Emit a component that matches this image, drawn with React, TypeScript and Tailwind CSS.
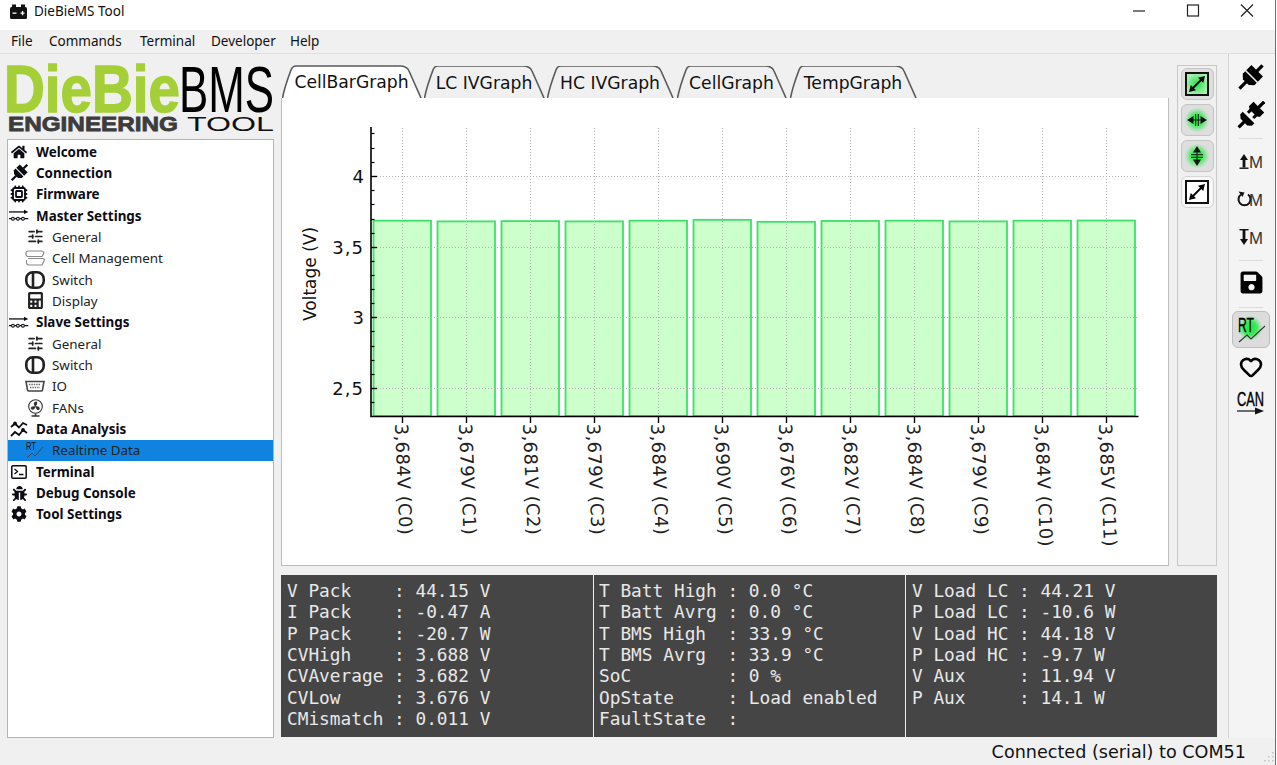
import React from 'react';
import { Cpu, Heart, SlidersHorizontal } from 'lucide-react';
import { FaBug, FaCalculator, FaCog, FaHome, FaSave } from 'react-icons/fa';

const PlugOn = ({ size = 24 }: { size?: number }) => (
  <svg width={size} height={size} viewBox="0 0 24 24">
    <g transform="rotate(45 12 12)" fill="currentColor">
      <rect x="10.600" y="-2" width="2.800" height="7" />
      <path d="M5 4.500h14v6.200H5z" />
      <path d="M5 12h14v3l-3.500 3.300h-7L5 15z" />
      <rect x="10.600" y="17" width="2.800" height="9" />
    </g>
  </svg>
);

const PlugOff = ({ size = 24 }: { size?: number }) => (
  <svg width={size} height={size} viewBox="0 0 24 24">
    <g transform="rotate(45 12 12)" fill="currentColor">
      <rect x="10.600" y="-4" width="2.800" height="8" />
      <path d="M5.500 2.500h13V8l-2.500 1.500H8L5.500 8z" />
      <rect x="7.500" y="9" width="2.600" height="3.500" />
      <rect x="13.900" y="9" width="2.600" height="3.500" />
      <path d="M5 15h14v3l-3 2.600H8L5 18z" />
      <rect x="10.600" y="20" width="2.800" height="7" />
    </g>
  </svg>
);

const Bus = () => (
  <svg width="28" height="17" viewBox="0 0 28 17" fill="none" stroke="currentColor">
    <path d="M0 3.500h23" strokeWidth="1.800" />
    <path d="M21 0.500l6 3-6 3z" fill="currentColor" stroke="none" />
    <path d="M0 13h3M8 13h2M15 13h2M22 13h5" strokeWidth="1.800" />
    <circle cx="5.500" cy="13" r="2" strokeWidth="1.600" />
    <circle cx="12.500" cy="13" r="2" strokeWidth="1.600" />
    <circle cx="19.500" cy="13" r="2" strokeWidth="1.600" />
  </svg>
);

const SwitchIcon = () => (
  <svg width="20" height="18" viewBox="0 0 20 18" fill="none" stroke="currentColor">
    <rect x="1.300" y="1.300" width="17.400" height="15.400" rx="6.500" strokeWidth="2.600" />
    <path d="M8 2v14" strokeWidth="2.600" />
  </svg>
);

const CellIcon = () => (
  <svg width="20" height="17" viewBox="0 0 20 17" fill="none" stroke="#8a8a8a" strokeWidth="1.200">
    <path d="M3 1h14a2 2 0 0 1 1.500 3L17 6.500H3A2 2 0 0 1 1 4.500V3a2 2 0 0 1 2-2z" />
    <path d="M3 8.500h15a1.500 1.500 0 0 1 1 2.500l-2 4H4a2.500 2.500 0 0 1-2.500-2.500V10" />
  </svg>
);

const IoIcon = () => (
  <svg width="20" height="12" viewBox="0 0 20 12" fill="none">
    <path d="M1 1.500h18l-1.500 8.500a1.500 1.500 0 0 1-1.500 1H4a1.500 1.500 0 0 1-1.500-1z" stroke="#444" strokeWidth="1.600" />
    <path d="M4 4.500h12M5 7.500h10" stroke="#666" strokeWidth="1.600" strokeDasharray="1.400 1" />
  </svg>
);

const FanIcon = () => (
  <svg width="17" height="18" viewBox="0 0 17 18" fill="none">
    <circle cx="8.500" cy="7.500" r="6.800" stroke="#333" strokeWidth="1.100" />
    <path d="M8.500 7.500C6 6 6.500 2.800 9 2.500c2 .2 1.600 3-.5 5zM8.500 7.500c2.700-1 5 1 4 3-1.200 1.500-3.400.2-4-3zM8.500 7.500c-.2 3-3 4-4.500 2.500-1-1.800 1.500-3.400 4.500-2.500z" fill="#333" />
    <path d="M8.500 14.500V16.500M4.500 17h8" stroke="#333" strokeWidth="1.500" />
  </svg>
);

const AnalysisIcon = () => (
  <svg width="18" height="17" viewBox="0 0 18 17" fill="none" stroke="currentColor" strokeWidth="1.800">
    <path d="M1 6l4-3.500 4 4 4-4.500 4 2" />
    <path d="M1 15l4-4 4 3 4-5 4 3" />
    <circle cx="5" cy="2.500" r="1" fill="currentColor" />
    <circle cx="13" cy="9" r="1" fill="currentColor" />
  </svg>
);

const RtSmall = () => (
  <svg width="18" height="18" viewBox="0 0 18 18" fill="none">
    <text x="0" y="9" fontFamily="'Liberation Sans', sans-serif" fontSize="11" textLength="10" lengthAdjust="spacingAndGlyphs" fill="#111">RT</text>
    <path d="M1 17l5-5 3 3 8-9" stroke="#444" strokeWidth="1" />
  </svg>
);

const TerminalIcon = () => (
  <svg width="16" height="14" viewBox="0 0 16 14" fill="none" stroke="currentColor">
    <rect x="0.800" y="0.800" width="14.400" height="12.400" rx="1" strokeWidth="1.500" />
    <path d="M3.500 4l3 2.500-3 2.500M8 9.500h4.500" strokeWidth="1.300" />
  </svg>
);

const DoubleArrow = () => (
  <g>
    <path d="M6 18L18 6" stroke="#000" strokeWidth="1.800" />
    <path d="M20 4l-7 1.800 5.200 5.200zM4 20l7-1.800L5.800 13z" fill="#000" />
  </g>
);

const FrameBtn = ({ green }: { green?: boolean }) => (
  <svg width="24" height="24" viewBox="0 0 24 24">
    <defs>
      <radialGradient id="frameGlow">
        <stop offset="0%" stopColor="#1fe04a" />
        <stop offset="100%" stopColor="#a8f0b0" />
      </radialGradient>
    </defs>
    <rect x="1" y="1" width="22" height="22" fill={green ? 'url(#frameGlow)' : '#fff'} stroke="#111" strokeWidth="2" />
    <DoubleArrow />
  </svg>
);

const AxisBtn = ({ vertical }: { vertical?: boolean }) => (
  <svg width="30" height="30" viewBox="0 0 30 30">
    <defs>
      <radialGradient id="axisGlow">
        <stop offset="0%" stopColor="#12f03c" />
        <stop offset="45%" stopColor="#40ea5c" />
        <stop offset="100%" stopColor="#60e878" stopOpacity="0" />
      </radialGradient>
    </defs>
    <circle cx="15" cy="15" r="12.500" fill="url(#axisGlow)" />
    <g transform={vertical ? 'rotate(90 15 15)' : undefined} fill="#111">
      <path d="M5 15l6.500-4v8zM25 15l-6.500-4v8z" />
      <rect x="13.200" y="9" width="1" height="12" />
      <rect x="15.800" y="9" width="1" height="12" />
      <rect x="10" y="14.500" width="10" height="1" />
    </g>
  </svg>
);

const MemIcon = ({ kind }: { kind: 'up' | 'cycle' | 'down' }) => (
  <svg width="28" height="22" viewBox="0 0 28 22" fill="none">
    {kind === 'up' && (
      <g fill="#111">
        <path d="M7 4l4 6h-2.600v7.500h-2.800V10H3z" />
        <rect x="2.500" y="17.500" width="9" height="1.400" />
      </g>
    )}
    {kind === 'down' && (
      <g fill="#111">
        <rect x="2.500" y="3" width="9" height="1.400" />
        <path d="M7 19l4-6H8.400V4H5.600v9H3z" />
      </g>
    )}
    {kind === 'cycle' && (
      <g>
        <path d="M4 6.500a6 6 0 1 0 7 0" stroke="#111" strokeWidth="2" />
        <path d="M1.500 3.500l6 1-2 4.500z" fill="#111" />
      </g>
    )}
    <text x="12" y="18" fontFamily="'Liberation Sans', sans-serif" fontSize="17" fill="#333" textLength="14" lengthAdjust="spacingAndGlyphs">M</text>
  </svg>
);

const RtBig = () => (
  <svg width="36" height="35" viewBox="0 0 36 35" fill="none">
    <defs>
      <radialGradient id="rtGlow">
        <stop offset="0%" stopColor="#14f03c" />
        <stop offset="55%" stopColor="#3fe85c" />
        <stop offset="100%" stopColor="#5fe878" stopOpacity="0" />
      </radialGradient>
    </defs>
    <circle cx="17" cy="16" r="12.500" fill="url(#rtGlow)" />
    <text x="5" y="20" fontFamily="'Liberation Sans', sans-serif" fontSize="21" textLength="16" lengthAdjust="spacingAndGlyphs" fill="#000" stroke="#000" strokeWidth="0.300">RT</text>
    <path d="M6 30l8-7 4 4 14-13" stroke="#333" strokeWidth="1.100" />
  </svg>
);

const CanIcon = () => (
  <svg width="30" height="28" viewBox="0 0 30 28" fill="none">
    <text x="1" y="18" fontFamily="'Liberation Sans', sans-serif" fontSize="20" textLength="27" lengthAdjust="spacingAndGlyphs" fill="#000" stroke="#000" strokeWidth="0.400">CAN</text>
    <path d="M1 23h22" stroke="#111" strokeWidth="1.200" />
    <path d="M19 19.500l9 3.500-9 3.500z" fill="#111" />
  </svg>
);

const Separator = () => <div className="h-px w-[24px] bg-[#dcdcdc]" />;

const tree = [
  { label: 'Welcome', icon: <FaHome size={16} /> },
  { label: 'Connection', icon: <PlugOn size={19} /> },
  { label: 'Firmware', icon: <Cpu size={18} strokeWidth={2.400} /> },
  { label: 'Master Settings', icon: <Bus /> },
  { label: 'General', child: true, icon: <SlidersHorizontal size={17} strokeWidth={2.400} /> },
  { label: 'Cell Management', child: true, icon: <CellIcon /> },
  { label: 'Switch', child: true, icon: <SwitchIcon /> },
  { label: 'Display', child: true, icon: <FaCalculator size={17} /> },
  { label: 'Slave Settings', icon: <Bus /> },
  { label: 'General', child: true, icon: <SlidersHorizontal size={17} strokeWidth={2.400} /> },
  { label: 'Switch', child: true, icon: <SwitchIcon /> },
  { label: 'IO', child: true, icon: <IoIcon /> },
  { label: 'FANs', child: true, icon: <FanIcon /> },
  { label: 'Data Analysis', icon: <AnalysisIcon /> },
  { label: 'Realtime Data', child: true, selected: true, icon: <RtSmall /> },
  { label: 'Terminal', icon: <TerminalIcon /> },
  { label: 'Debug Console', icon: <FaBug size={15} /> },
  { label: 'Tool Settings', icon: <FaCog size={16} /> },
];

const menus = [
  { label: 'File', cls: 'w-[38px]' },
  { label: 'Commands', cls: 'w-[91px]' },
  { label: 'Terminal', cls: 'w-[71px]' },
  { label: 'Developer', cls: 'w-[79px]' },
  { label: 'Help', cls: 'w-[40px]' },
];

const tabs = [
  { label: 'CellBarGraph', width: 140, active: true, gap: 'mr-[2px]' },
  { label: 'LC IVGraph', width: 121, gap: 'mr-[2px]' },
  { label: 'HC IVGraph', width: 127, gap: 'mr-[3px]' },
  { label: 'CellGraph', width: 110, gap: 'mr-[3px]' },
  { label: 'TempGraph', width: 127, gap: '' },
];

const Tab = ({ label, width, active, gap }: { label: string; width: number; active?: boolean; gap: string }) => {
  const h = active ? 33 : 32;
  const path = `M0.500 ${h}C2 ${h - 8} 6 ${h - 20} 9 ${h - 28}Q10.500 ${h - 32} 14 ${h - 32}L${width - 22} ${h - 32}Q${width - 15} ${h - 32} ${width - 13} ${h - 27}L${width - 1} ${h}`;
  return (
    <div className={`relative h-[33px] shrink-0 ${gap}`} style={{ width }}>
      <svg className="absolute bottom-0 left-0" width={width} height={h} fill="none">
        <path d={`${path}Z`} fill={active ? '#ffffff' : '#f0f0f0'} stroke="none" />
        <path d={path} stroke="#5a5a5a" strokeWidth="1.600" />
      </svg>
      <div
        className={`relative pr-[1px] text-center font-['DejaVu_Sans',sans-serif] text-[17.200px] leading-[20px] text-[#111] ${
          active ? 'pt-[7px]' : 'pt-[8px]'
        }`}
      >
        {label}
      </div>
    </div>
  );
};

const cells = [3.684, 3.679, 3.681, 3.679, 3.684, 3.69, 3.676, 3.682, 3.684, 3.679, 3.684, 3.685];
const chartFont = "'DejaVu Sans', sans-serif";

const Chart = () => (
  <svg className="block" width="886" height="467" viewBox="282 98 886 467">
    {cells.map((v, i) => {
      const top = 176 + (4 - v) * 141.4;
      return (
        <rect
          key={i}
          x={373.500 + i * 64}
          y={top}
          width={57.500}
          height={416 - top}
          fill="#ccffcc"
          stroke="#3ee06a"
          strokeWidth="1.800"
        />
      );
    })}
    <g stroke="#b4b4b4" strokeWidth="1" strokeDasharray="1 2">
      {cells.map((_, i) => (
        <path key={i} d={`M${402.500 + i * 64} 128V416`} />
      ))}
      {[176.500, 247.500, 317.500, 388.500].map((y) => (
        <path key={y} d={`M371 ${y}H1138`} />
      ))}
    </g>
    <g stroke="#000" strokeWidth="1.600" fill="none">
      <path d="M371 127V416.500H1138.500" />
      {[133, 148, 162, 190, 204, 219, 233, 261, 275, 289, 303, 331, 346, 360, 374, 402].map((y) => (
        <path key={y} d={`M371 ${y + 0.5}h3.500`} strokeWidth="1.200" />
      ))}
      {[176, 247, 317, 388].map((y) => (
        <path key={y} d={`M371 ${y + 0.5}h6`} strokeWidth="1.400" />
      ))}
      {cells.map((_, i) => (
        <path key={i} d={`M${402.500 + i * 64} 416v7`} strokeWidth="1.400" />
      ))}
    </g>
    <g fontFamily={chartFont} fontSize="18" fill="#111" textAnchor="end">
      <text x="364" y="183">4</text>
      <text x="364" y="254" letterSpacing="1">3,5</text>
      <text x="364" y="324">3</text>
      <text x="364" y="395" letterSpacing="1">2,5</text>
    </g>
    <text transform="translate(316 321) rotate(-90)" fontFamily={chartFont} fontSize="17" fill="#111">
      Voltage (V)
    </text>
    {cells.map((v, i) => (
      <text
        key={i}
        transform={`translate(${395 + i * 64} 424) rotate(87.700)`}
        fontFamily={chartFont}
        fontSize="18"
        letterSpacing="0.350"
        fill="#222"
        xmlSpace="preserve"
      >
        {`${v.toFixed(3).replace('.', ',')}V (C${i})`}
      </text>
    ))}
  </svg>
);

const Logo = () => (
  <svg className="block" width="268" height="71" viewBox="0 0 268 71">
    <text x="-3" y="50" fontFamily="'Liberation Sans', sans-serif" fontWeight="700" fontSize="66" textLength="176" lengthAdjust="spacingAndGlyphs" fill="#a5cf37" stroke="#a5cf37" strokeWidth="1.500">
      DieBie
    </text>
    <text x="172" y="50" fontFamily="'Liberation Sans', sans-serif" fontSize="65" textLength="95" lengthAdjust="spacingAndGlyphs" fill="#000">
      BMS
    </text>
    <text x="1" y="69" fontFamily="'Liberation Sans', sans-serif" fontWeight="700" fontSize="21" textLength="170" lengthAdjust="spacingAndGlyphs" fill="#3c3c3c" stroke="#3c3c3c" strokeWidth="0.800">
      ENGINEERING
    </text>
    <text x="180" y="69" fontFamily="'Liberation Sans', sans-serif" fontSize="21" textLength="87" lengthAdjust="spacingAndGlyphs" fill="#111">
      TOOL
    </text>
  </svg>
);

const panels = [
  {
    cls: 'w-[312px] pl-[6px]',
    lines: ['V Pack    : 44.15 V', 'I Pack    : -0.47 A', 'P Pack    : -20.7 W', 'CVHigh    : 3.688 V', 'CVAverage : 3.682 V', 'CVLow     : 3.676 V', 'CMismatch : 0.011 V'],
  },
  {
    cls: 'w-[311px] pl-[5px]',
    lines: ['T Batt High : 0.0 °C', 'T Batt Avrg : 0.0 °C', 'T BMS High  : 33.9 °C', 'T BMS Avrg  : 33.9 °C', 'SoC         : 0 %', 'OpState     : Load enabled', 'FaultState  :'],
  },
  {
    cls: 'w-[311px] pl-[6px]',
    lines: ['V Load LC : 44.21 V', 'P Load LC : -10.6 W', 'V Load HC : 44.18 V', 'P Load HC : -9.7 W', 'V Aux     : 11.94 V', 'P Aux     : 14.1 W'],
  },
];

export default function App() {
  return (
    <div className="flex h-[765px] w-[1277px] overflow-hidden bg-white">
      <div className="flex w-[1275px] flex-col bg-[#f0f0f0] font-['Noto_Sans',sans-serif] text-[#111]">
        <div className="flex h-[30px] items-center bg-white pb-[7px] pl-[10px]">
          <svg width="17" height="15" viewBox="0 0 17 15" fill="#111">
            <rect x="0" y="3" width="17" height="12" rx="1.500" />
            <rect x="2" y="0.500" width="4" height="3" />
            <rect x="11" y="0.500" width="4" height="3" />
            <path d="M2.500 8.500h4v1.300h-4zM10.500 8.500h4v1.300h-4zM11.900 7h1.300v4.300h-1.300z" fill="#fff" />
          </svg>
          <span className="ml-[7px] text-[13.500px]">DieBieMS Tool</span>
          <div className="ml-auto flex items-center text-[#111]">
            <svg width="160" height="20" viewBox="0 0 160 20" fill="none" stroke="#222" strokeWidth="1.200">
              <path d="M33 10h12" />
              <rect x="87.500" y="4" width="11" height="11" />
              <path d="M141 3.500l12 12M153 3.500l-12 12" />
            </svg>
            <div className="w-[15px]" />
          </div>
        </div>
        <div className="flex h-[23px] items-center pl-[11px] text-[13.500px]">
          {menus.map((m) => (
            <span key={m.label} className={m.cls}>
              {m.label}
            </span>
          ))}
        </div>
        <div className="h-px bg-[#dfdfdf]" />
        <div className="flex h-[686px]">
          <div className="flex w-[281px] shrink-0 flex-col pl-[7px]">
            <div className="mt-[8px] h-[77px]">
              <Logo />
            </div>
            <div className="h-[599px] w-[267px] border border-[#b4b4b4] bg-white pt-[1.300px]">
              {tree.map((row, i) => (
                <div
                  key={i}
                  className={`flex h-[21.35px] items-center text-[13.400px] ${
                    row.child ? 'font-normal text-[#222]' : 'font-bold text-[#0c0c14]'
                  } ${row.selected ? 'bg-[#0f83df]' : ''}`}
                >
                  <div className={`flex h-full shrink-0 items-center justify-center ${row.child ? 'ml-[17px] w-[20px]' : 'ml-[1px] w-[20px]'}`}>
                    {row.icon}
                  </div>
                  <span className="ml-[7px]">{row.label}</span>
                </div>
              ))}
            </div>
          </div>
          <div className="flex w-[947px] shrink-0 flex-col">
            <div className="flex h-[513px] pt-[11px]">
              <div className="w-[888px] shrink-0">
                <div className="flex pl-[1px]">
                  {tabs.map((t) => (
                    <Tab key={t.label} {...t} />
                  ))}
                </div>
                <div className="h-[468px] border border-t-0 border-[#bdbdbd] bg-white">
                  <Chart />
                </div>
              </div>
              <div className="ml-[8px] flex h-[501px] w-[40px] flex-col items-center gap-[4px] border border-[#c8c8c8] pt-[2px]">
                <div className="flex h-[32px] w-[33px] items-center justify-center rounded-md border border-[#c4c4c4] bg-[#dedede]">
                  <FrameBtn green />
                </div>
                <div className="flex h-[32px] w-[33px] items-center justify-center rounded-md border border-[#c4c4c4] bg-[#dedede]">
                  <AxisBtn />
                </div>
                <div className="flex h-[32px] w-[33px] items-center justify-center rounded-md border border-[#c4c4c4] bg-[#dedede]">
                  <AxisBtn vertical />
                </div>
                <div className="flex h-[32px] w-[33px] items-center justify-center rounded-md border border-[#d4d4d4] bg-[#f7f7f7]">
                  <FrameBtn />
                </div>
              </div>
            </div>
            <div className="mt-[8px] flex h-[162px] gap-[1px] font-['DejaVu_Sans_Mono',monospace] text-[17.800px] leading-[21.350px] text-[#e8e8e8]">
              {panels.map((p, i) => (
                <div key={i} className={`${p.cls} bg-[#454545] pt-[5.500px]`}>
                  {p.lines.map((line) => (
                    <div key={line} className="whitespace-pre">
                      {line}
                    </div>
                  ))}
                </div>
              ))}
            </div>
          </div>
          <div className="flex w-[47px] shrink-0 flex-col items-center border-l border-[#d4d4d4] bg-[#f4f4f4] pr-[2px] pt-[4px] text-[#000]">
            <div className="flex h-[38px] items-center justify-center">
              <PlugOn size={28} />
            </div>
            <div className="flex h-[38px] items-center justify-center">
              <PlugOff size={28} />
            </div>
            <div className="mb-[3px] mt-[4px]">
              <Separator />
            </div>
            <div className="flex h-[38px] items-center justify-center">
              <MemIcon kind="up" />
            </div>
            <div className="flex h-[38px] items-center justify-center">
              <MemIcon kind="cycle" />
            </div>
            <div className="flex h-[38px] items-center justify-center">
              <MemIcon kind="down" />
            </div>
            <div className="mb-[3px] mt-[4px]">
              <Separator />
            </div>
            <div className="flex h-[38px] items-center justify-center">
              <FaSave size={25} />
            </div>
            <div className="mb-[3px] mt-[5px]">
              <Separator />
            </div>
            <div className="flex h-[37px] w-[38px] items-center justify-center rounded-md border border-[#bcbcbc] bg-[#dcdcdc]">
              <RtBig />
            </div>
            <div className="flex h-[38px] items-center justify-center">
              <Heart size={24} strokeWidth={2.600} />
            </div>
            <div className="flex h-[33px] items-center justify-center">
              <CanIcon />
            </div>
          </div>
        </div>
        <div className="relative flex flex-1 items-center justify-end pr-[29px] pt-[1px] font-['DejaVu_Sans',sans-serif] text-[17.600px] text-[#111]">
          Connected (serial) to COM51
          <svg className="absolute bottom-[2px] right-[1px]" width="12" height="12" viewBox="0 0 12 12" fill="#c4c4c4">
            <rect x="10" y="1" width="1.500" height="1.500" />
            <rect x="6" y="5" width="1.500" height="1.500" />
            <rect x="10" y="5" width="1.500" height="1.500" />
            <rect x="2" y="9" width="1.500" height="1.500" />
            <rect x="6" y="9" width="1.500" height="1.500" />
            <rect x="10" y="9" width="1.500" height="1.500" />
          </svg>
        </div>
      </div>
      <div className="w-px bg-[#1b82d6]" />
    </div>
  );
}
